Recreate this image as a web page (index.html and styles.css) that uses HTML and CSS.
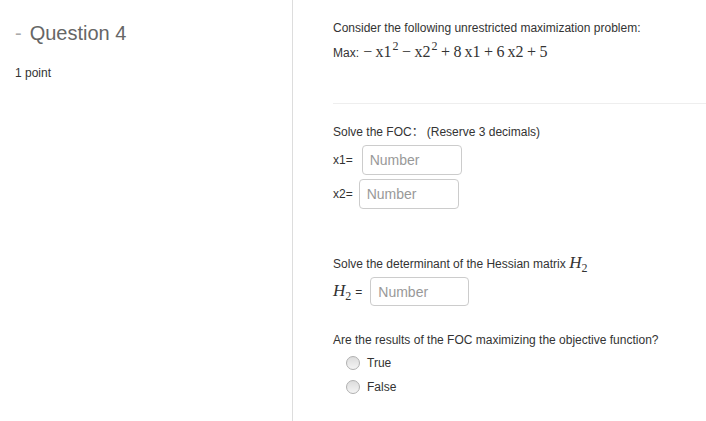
FILE: index.html
```html
<!DOCTYPE html>
<html lang="en">
<head>
<meta charset="utf-8">
<title>Question 4</title>
<link rel="stylesheet" href="styles.css">
</head>
<body>
<div class="page">
  <aside class="meta">
    <h2 class="qtitle"><span class="dash">-</span>Question 4</h2>
    <div class="points">1 point</div>
  </aside>
  <main class="content">
    <p class="prompt first">Consider the following unrestricted maximization problem:</p>
    <p class="formula">Max: <span class="math"><span class="un">−</span>x1<sup>2</sup><span class="bin">−</span>x2<sup>2</sup><span class="bin">+</span>8<span class="sp"></span>x1<span class="bin">+</span>6<span class="sp"></span>x2<span class="bin">+</span>5</span></p>
    <hr class="divider">
    <p class="prompt foc">Solve the FOC<span class="fw">：</span>(Reserve 3 decimals)</p>
    <div class="field-row row-x1">
      <label class="lbl">x1=</label>
      <input class="num num-x1" type="text" placeholder="Number">
    </div>
    <div class="field-row row-x2">
      <label class="lbl">x2=</label>
      <input class="num num-x2" type="text" placeholder="Number">
    </div>
    <p class="prompt hess">Solve the determinant of the Hessian matrix <span class="mvar">H<sub>2</sub></span></p>
    <div class="field-row row-h">
      <label class="lbl"><span class="mvar">H<sub>2</sub></span><span class="eq">=</span></label>
      <input class="num num-h" type="text" placeholder="Number">
    </div>
    <p class="prompt ask">Are the results of the FOC maximizing the objective function?</p>
    <ul class="options">
      <li class="option"><span class="radio"></span><span>True</span></li>
      <li class="option"><span class="radio"></span><span>False</span></li>
    </ul>
  </main>
</div>
</body>
</html>
```
FILE: styles.css
```css
html, body {
  margin: 0;
  padding: 0;
  background: #fff;
}
body {
  font-family: "Liberation Sans", Arial, sans-serif;
  font-size: 12px;
  color: #333;
}
.page {
  display: flex;
  height: 421px;
}
.meta {
  width: 293px;
  box-sizing: border-box;
  border-right: 1px solid #ddd;
  padding-left: 15px;
  flex: none;
}
.qtitle {
  margin: 22px 0 0;
  font-size: 20px;
  font-weight: normal;
  line-height: 23px;
  color: #666;
}
.dash {
  color: #aaa;
  margin-right: 8px;
}
.points {
  margin-top: 21px;
  line-height: 14px;
  color: #333;
}
.content {
  flex: 1;
  padding-left: 40px;
}
.prompt {
  margin: 0;
  line-height: 14px;
}
.prompt.first {
  margin-top: 21px;
}
.formula {
  margin: 7px 0 0;
  line-height: 20px;
  height: 20px;
}
.math {
  font-family: "Liberation Serif", "Times New Roman", serif;
  font-size: 16px;
  color: #333;
  margin-left: 1px;
}
.math sup {
  font-size: 12px;
  vertical-align: 7px;
  line-height: 0;
  margin-left: 1px;
}
.un {
  margin-right: 3px;
}
.bin {
  margin: 0 3.5px;
}
.sp {
  display: inline-block;
  width: 3px;
}
.divider {
  margin: 41px 0 0;
  border: 0;
  border-top: 1px solid #eee;
  height: 0;
}
.prompt.foc {
  margin-top: 20px;
}
.fw {
  font-family: "Noto Sans CJK SC", sans-serif;
  margin-right: 3px;
}
.field-row {
  display: flex;
  align-items: center;
}
.row-x1 {
  margin-top: 6px;
}
.row-x2 {
  margin-top: 4px;
}
.lbl {
  line-height: 14px;
  color: #333;
}
.eq {
  margin-left: 4px;
}
.num {
  box-sizing: border-box;
  width: 100px;
  height: 30px;
  border: 1px solid #ccc;
  border-radius: 4px;
  padding: 0 0 0 7px;
  font-family: "Liberation Sans", Arial, sans-serif;
  font-size: 14px;
  color: #333;
  background: #fff;
  outline: none;
}
.num::placeholder {
  color: #999;
}
.num-x1 {
  margin-left: 9px;
}
.num-x2 {
  margin-left: 6px;
}
.prompt.hess {
  margin-top: 44px;
  line-height: 20px;
}
.mvar {
  font-family: "Liberation Serif", "Times New Roman", serif;
  font-style: italic;
  font-size: 17px;
  color: #333;
}
.mvar sub {
  font-style: normal;
  font-size: 12px;
  vertical-align: -4px;
  line-height: 0;
}
.row-h {
  margin-top: 3px;
}
.num-h {
  height: 29px;
  width: 99px;
  margin-left: 8px;
}
.prompt.ask {
  margin-top: 27px;
}
.options {
  list-style: none;
  margin: 4px 0 0;
  padding: 0 0 0 13px;
}
.option {
  display: flex;
  align-items: center;
  height: 24px;
  line-height: 24px;
}
.radio {
  box-sizing: border-box;
  width: 14px;
  height: 14px;
  border-radius: 50%;
  border: 1px solid #b0b0b0;
  background: linear-gradient(#dcdcdc, #f4f4f4);
  margin-right: 7px;
  flex: none;
}
```
